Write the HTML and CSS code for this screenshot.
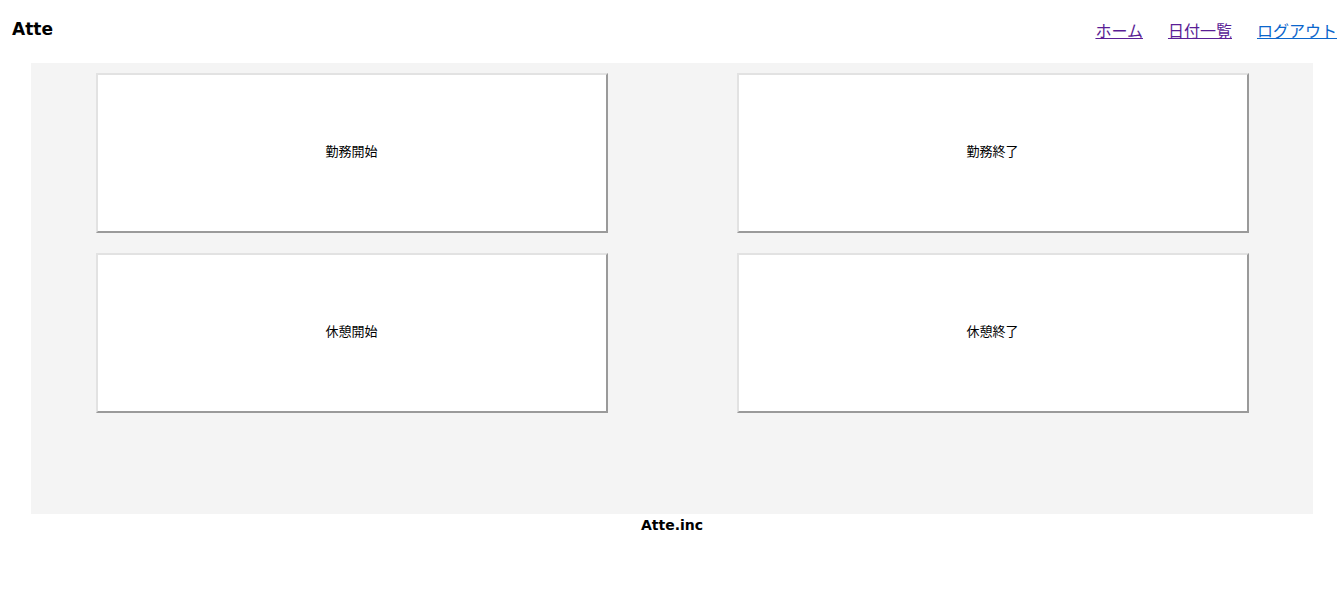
FILE: index.html
```html
<!DOCTYPE html>
<html lang="ja">
<head>
<meta charset="utf-8">
<title>Atte</title>
<link rel="stylesheet" href="styles.css">
</head>
<body>
<header class="header">
  <h1 class="logo">Atte</h1>
  <nav class="nav">
    <a class="nav-link visited" href="#">ホーム</a>
    <a class="nav-link visited" href="#">日付一覧</a>
    <a class="nav-link" href="#">ログアウト</a>
  </nav>
</header>
<main class="main">
  <div class="stamp-grid">
    <div class="cell"><button class="stamp">勤務開始</button></div>
    <div class="cell"><button class="stamp">勤務終了</button></div>
    <div class="cell"><button class="stamp">休憩開始</button></div>
    <div class="cell"><button class="stamp">休憩終了</button></div>
  </div>
</main>
<footer class="footer">
  <small class="copy">Atte.inc</small>
</footer>
</body>
</html>
```

FILE: styles.css
```css
html, body {
  margin: 0;
  padding: 0;
  background: #ffffff;
  font-family: "DejaVu Sans", Verdana, "Noto Sans CJK JP", sans-serif;
  color: #000;
}

.header {
  height: 63px;
  display: flex;
  align-items: center;
  justify-content: space-between;
  padding: 0 7px 4px 12px;
  box-sizing: border-box;
}

.logo {
  margin: 0;
  font-size: 17px;
  font-weight: bold;
  line-height: 1;
}

.nav {
  display: flex;
  gap: 25px;
  font-family: "Noto Sans CJK JP", sans-serif;
  font-size: 16px;
}

.nav-link {
  color: #0b66cc;
  text-decoration: underline;
}

.nav-link.visited {
  color: #5a1e96;
}

.main {
  margin: 0 31px;
  height: 451px;
  background: #f4f4f4;
  padding-top: 10px;
  box-sizing: border-box;
}

.stamp-grid {
  display: grid;
  grid-template-columns: 1fr 1fr;
  row-gap: 20px;
}

.cell {
  display: flex;
  justify-content: center;
}

.stamp {
  width: 512px;
  height: 160px;
  background: #ffffff;
  border-style: solid;
  border-width: 2px;
  border-color: #e2e2e2 #9a9a9a #9a9a9a #e2e2e2;
  font-family: "Noto Sans CJK JP", sans-serif;
  font-size: 13px;
  color: #000;
  padding: 0 0 5px;
  cursor: pointer;
}

.footer {
  text-align: center;
  padding-top: 1px;
}

.copy {
  font-size: 14px;
  font-weight: bold;
}
```
